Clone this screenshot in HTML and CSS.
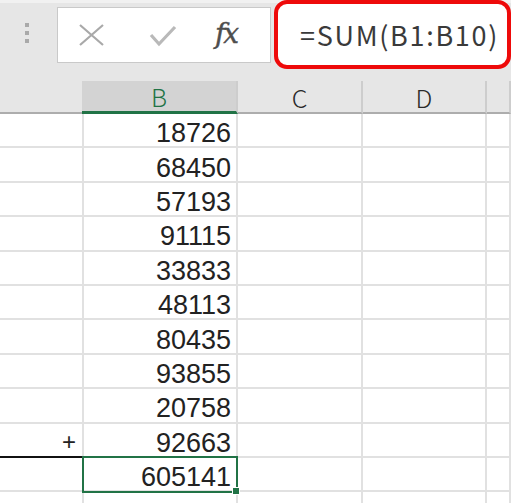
FILE: index.html
```html
<!DOCTYPE html>
<html lang="ja">
<head>
    <meta charset="UTF-8">
    <meta name="viewport" content="width=device-width, initial-scale=1.0">
    <title>SUM</title>
    <link rel="stylesheet" href="styles.css">
</head>
<body>
    <!-- 數式列 -->
    <div class="toolbar">
        <div class="grip">
            <i></i><i></i><i></i>
        </div>
        <div class="fbox">
            <svg class="icon-x" width="27" height="22" viewBox="0 0 27 22">
                <path d="M2 1 L25 21 M25 1 L2 21" stroke="#a9a9a9" stroke-width="2.2" fill="none"/>
            </svg>
            <svg class="icon-ok" width="28" height="22" viewBox="0 0 28 22">
                <path d="M2 10 L10 19 L26 2" stroke="#b9b9b9" stroke-width="3.2" fill="none"/>
            </svg>
            <span class="fx">fx</span>
        </div>
        <div class="formula">=SUM(B1:B10)</div>
    </div>

    <!-- 工作表 -->
    <div class="sheet" id="sheet">
        <div class="hd"></div>
        <div class="hd sel">B</div>
        <div class="hd">C</div>
        <div class="hd">D</div>
        <div class="hd"></div>
    </div>

    <script>
        const sheet = document.querySelector('#sheet');
        const nums = [18726, 68450, 57193, 91115, 33833, 48113, 80435, 93855, 20758, 92663, 605141];

        // 每一列: A B C D E
        let str = '';
        nums.forEach((n, i) => {
            let a = '<div class="cell"></div>';
            if (i === 9) {
                a = '<div class="cell mark">+</div>';
            }
            let b = i === 10 ? 'cell num active' : 'cell num';
            str += `${a}<div class="${b}">${n}</div><div class="cell"></div><div class="cell"></div><div class="cell"></div>`;
        });
        str += '<div class="cell"></div><div class="cell"></div><div class="cell"></div><div class="cell"></div><div class="cell"></div>';
        sheet.innerHTML += str;
    </script>
</body>
</html>
```

FILE: styles.css
```css
html, body{
    margin: 0;
    padding: 0;
}
body{
    width: 511px;
    height: 503px;
    overflow: hidden;
    background-color: #fff;
    font-family: "Noto Sans CJK JP", "Liberation Sans", sans-serif;
}
.toolbar{
    display: flex;
    align-items: flex-start;
    height: 81px;
    background-color: #e6e6e6;
    border-top: 3px solid #f1f1f1;
    box-sizing: border-box;
}
.grip{
    display: flex;
    flex-direction: column;
    gap: 4px;
    width: 57px;
    padding: 20px 0 0 25px;
    box-sizing: border-box;
}
.grip i{
    display: block;
    width: 4px;
    height: 4px;
    background-color: #a9a9a9;
}
.fbox{
    display: flex;
    align-items: center;
    margin-top: 4px;
    width: 214px;
    height: 56px;
    border: 1px solid #c9c9c9;
    background-color: #fff;
    box-sizing: border-box;
}
.icon-x{
    margin-left: 20px;
    margin-top: -1px;
}
.icon-ok{
    margin-left: 44px;
    margin-top: 1px;
}
.fx{
    margin-left: 38px;
    margin-top: -4px;
    font-family: "DejaVu Serif", serif;
    font-style: italic;
    font-size: 28px;
    color: #4e4e4e;
    letter-spacing: -2px;
    -webkit-text-stroke: 0.4px #4e4e4e;
}
.formula{
    display: flex;
    align-items: center;
    margin-left: 3px;
    margin-top: -3px;
    width: 237px;
    height: 69px;
    padding-left: 22px;
    border: 4px solid #ee0a0a;
    border-radius: 13px;
    background-color: #fff;
    box-sizing: border-box;
    font-size: 27px;
    letter-spacing: 1.7px;
    color: #3a3a3a;
}
.sheet{
    display: grid;
    grid-template-columns: 84px 154px 125px 124px 1fr;
    grid-template-rows: 33px;
    grid-auto-rows: 34.4px;
}
.hd{
    display: flex;
    align-items: center;
    justify-content: center;
    background-color: #e6e6e6;
    border-right: 2px solid #cdcdcd;
    border-bottom: 2px solid #adadad;
    box-sizing: border-box;
    font-size: 25px;
    font-weight: 300;
    color: #2a2a2a;
}
.hd:first-child{
    border-right: none;
}
.hd.sel{
    margin-left: -2px;
    background-color: #d3d3d3;
    border-bottom: 3px solid #217346;
    color: #217346;
}
.cell{
    display: flex;
    align-items: center;
    justify-content: flex-end;
    padding-right: 5px;
    border-right: 2px solid #e1e1e1;
    border-bottom: 2px solid #e1e1e1;
    box-sizing: border-box;
    font-family: "Liberation Sans", sans-serif;
    font-size: 27px;
    line-height: 1;
    color: #222;
}
.num{
    padding-top: 7px;
}
.mark{
    padding-right: 6px;
    padding-top: 4px;
    font-size: 24px;
    border-bottom-color: #111;
}
.active{
    position: relative;
}
.active::before{
    content: "";
    position: absolute;
    left: -2px;
    top: -2px;
    right: -2px;
    bottom: -3px;
    border: 2px solid #217346;
}
.active::after{
    content: "";
    position: absolute;
    right: -4px;
    bottom: -5px;
    width: 6px;
    height: 6px;
    background-color: #217346;
    border: 1px solid #fff;
}
```
